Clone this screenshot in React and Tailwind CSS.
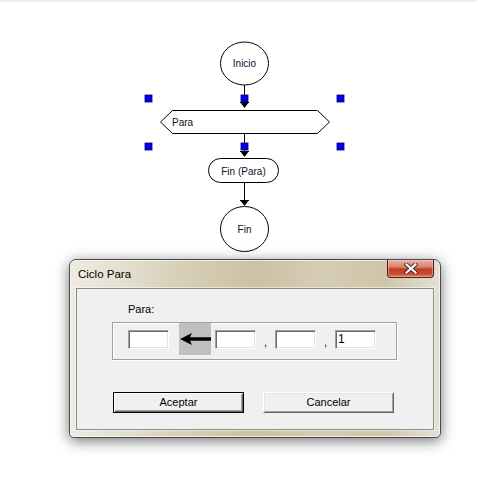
import React from 'react';

const FONT = "font-['Liberation_Sans',Arial,sans-serif]";

// pequeño triángulo de flecha hacia abajo
function ArrowDown({ x, y }) {
  return (
    <g>
      <line x1={x - 4} y1={y + 0.5} x2={x + 5} y2={y + 0.5} stroke="#000" />
      <polygon points={`${x - 4},${y} ${x + 5},${y} ${x + 0.5},${y + 6}`} fill="#000" />
    </g>
  );
}

function Handle({ cx, cy }) {
  return <rect x={cx - 3} y={cy - 3} width="7" height="7" fill="#0000f0" stroke="#000060" strokeWidth="0.8" />;
}

function Flowchart() {
  const t = { fontFamily: 'Liberation Sans, Arial, sans-serif', fontSize: 10, fill: '#101028' };
  return (
    <svg width="478" height="260" className="absolute left-0 top-0">
      <ellipse cx="244.5" cy="63.5" rx="24" ry="21.5" fill="#fff" stroke="#000" />
      <text x="244.5" y="67" textAnchor="middle" {...t}>Inicio</text>
      <line x1="244.5" y1="85" x2="244.5" y2="103" stroke="#000" />
      <ArrowDown x={244} y={102} />

      <polygon points="160.5,122 172.5,110.5 317.5,110.5 329.5,122 317.5,133.5 172.5,133.5" fill="#fff" stroke="#000" />
      <text x="172" y="126" {...t}>Para</text>
      <line x1="244.5" y1="134" x2="244.5" y2="152" stroke="#000" />
      <ArrowDown x={244} y={151} />

      <rect x="208.5" y="158.5" width="70" height="24" rx="12" fill="#fff" stroke="#000" />
      <text x="243.5" y="174.5" textAnchor="middle" {...t}>Fin (Para)</text>
      <line x1="244.5" y1="183" x2="244.5" y2="201" stroke="#000" />
      <ArrowDown x={244} y={200} />

      <ellipse cx="244.5" cy="229" rx="24" ry="22.5" fill="#fff" stroke="#000" />
      <text x="244.5" y="232.5" textAnchor="middle" {...t}>Fin</text>

      <Handle cx={148} cy={98} />
      <Handle cx={244} cy={98} />
      <Handle cx={340} cy={98} />
      <Handle cx={148} cy={146} />
      <Handle cx={244} cy={146} />
      <Handle cx={340} cy={146} />
    </svg>
  );
}

function Field({ value }) {
  return (
    <div className="mt-[7px] w-[41px] h-[19px] shrink-0 bg-white border border-t-[#a0a0a0] border-l-[#a0a0a0] border-r-white border-b-white shadow-[inset_1px_1px_0_#696969,inset_-1px_-1px_0_#e3e3e3] text-[12px] leading-[16px] pl-[2px] text-black">
      {value}
    </div>
  );
}

function Comma() {
  return (
    <div className="mt-[7px] w-[19px] h-[19px] shrink-0 flex items-end justify-center text-[11px] leading-[13px] text-black">
      ,
    </div>
  );
}

function CloseButton() {
  return (
    <div className="absolute right-[6px] top-0 w-[47px] h-[18px] rounded-b-[4px] border border-t-0 border-[#4b1e17] bg-[linear-gradient(180deg,#eab3a4_0%,#d9826d_40%,#c33b22_55%,#c8492f_80%,#e07a5d_100%)] shadow-[inset_0_0_0_1px_rgba(255,210,200,0.45)] flex items-center justify-center">
      <svg width="14" height="11" viewBox="0 0 14 11">
        <path d="M2.5 1.5 L11.5 9.5 M11.5 1.5 L2.5 9.5" stroke="#3a2a2a" strokeWidth="4" strokeLinecap="square" />
        <path d="M2.5 1.5 L11.5 9.5 M11.5 1.5 L2.5 9.5" stroke="#fff" strokeWidth="2.2" strokeLinecap="square" />
      </svg>
    </div>
  );
}

function Dialog() {
  return (
    <div className={`absolute left-[69px] top-[259px] w-[372px] h-[179px] flex flex-col rounded-t-[7px] rounded-b-[5px] border border-[#4a4a4a] bg-[linear-gradient(90deg,#eeebe3_0%,#e6e1d3_12%,#d7cfb7_30%,#ccc1a4_50%,#d5ccb4_68%,#cfc5aa_85%,#e4e0d4_100%)] shadow-[0_3px_14px_rgba(0,0,0,0.55),inset_0_0_0_1px_rgba(255,255,255,0.6)] ${FONT}`}>
      <div className="relative h-[28px] shrink-0">
        <div className="pl-[8px] pt-[7px] text-[11.5px] leading-[14px] text-black">Ciclo Para</div>
        <CloseButton />
      </div>
      <div className="mx-[6px] h-[142px] shrink-0 border border-[#8a8a8a] bg-[#f0f0f0] shadow-[0_0_0_1px_rgba(255,255,255,0.5)] flex flex-col">
        <div className="pl-[51px] pt-[14px] h-[27px] text-[11px] leading-[13px] text-black">Para:</div>
        <div className="ml-[35px] mt-[6px] w-[285px] h-[38px] border border-[#a0a0a0] shadow-[inset_1px_1px_0_#fff,1px_1px_0_#fff] flex items-start">
          <div className="ml-[15px]" />
          <Field />
          <div className="ml-[10px] w-[32px] h-[32px] shrink-0 bg-[#c0c0c0] flex items-center">
            <svg width="32" height="32" viewBox="0 0 32 32">
              <polygon points="1,16 13,10 11,14.2 32,14.2 32,17.8 11,17.8 13,22" fill="#000" />
            </svg>
          </div>
          <div className="ml-[4px]" />
          <Field />
          <Comma />
          <Field />
          <Comma />
          <Field value="1" />
        </div>
        <div className="mt-[32px] ml-[36px] flex gap-[19px]">
          <button className="w-[131px] h-[21px] border border-black bg-[#f0f0f0] shadow-[inset_1px_1px_0_#fff,inset_-1px_-1px_0_#696969,inset_-2px_-2px_0_#a0a0a0] text-[11px] leading-[19px] text-black">
            Aceptar
          </button>
          <button className="w-[131px] h-[21px] border border-t-white border-l-white border-r-[#696969] border-b-[#696969] bg-[#f0f0f0] shadow-[inset_1px_1px_0_#e3e3e3,inset_-1px_-1px_0_#a0a0a0] text-[11px] leading-[19px] text-black">
            Cancelar
          </button>
        </div>
      </div>
    </div>
  );
}

export default function App() {
  return (
    <div className="relative w-[478px] h-[482px] bg-white overflow-hidden">
      <div className="h-[2px] w-[477px] bg-[#f0f0f0]" />
      <Flowchart />
      <Dialog />
    </div>
  );
}
